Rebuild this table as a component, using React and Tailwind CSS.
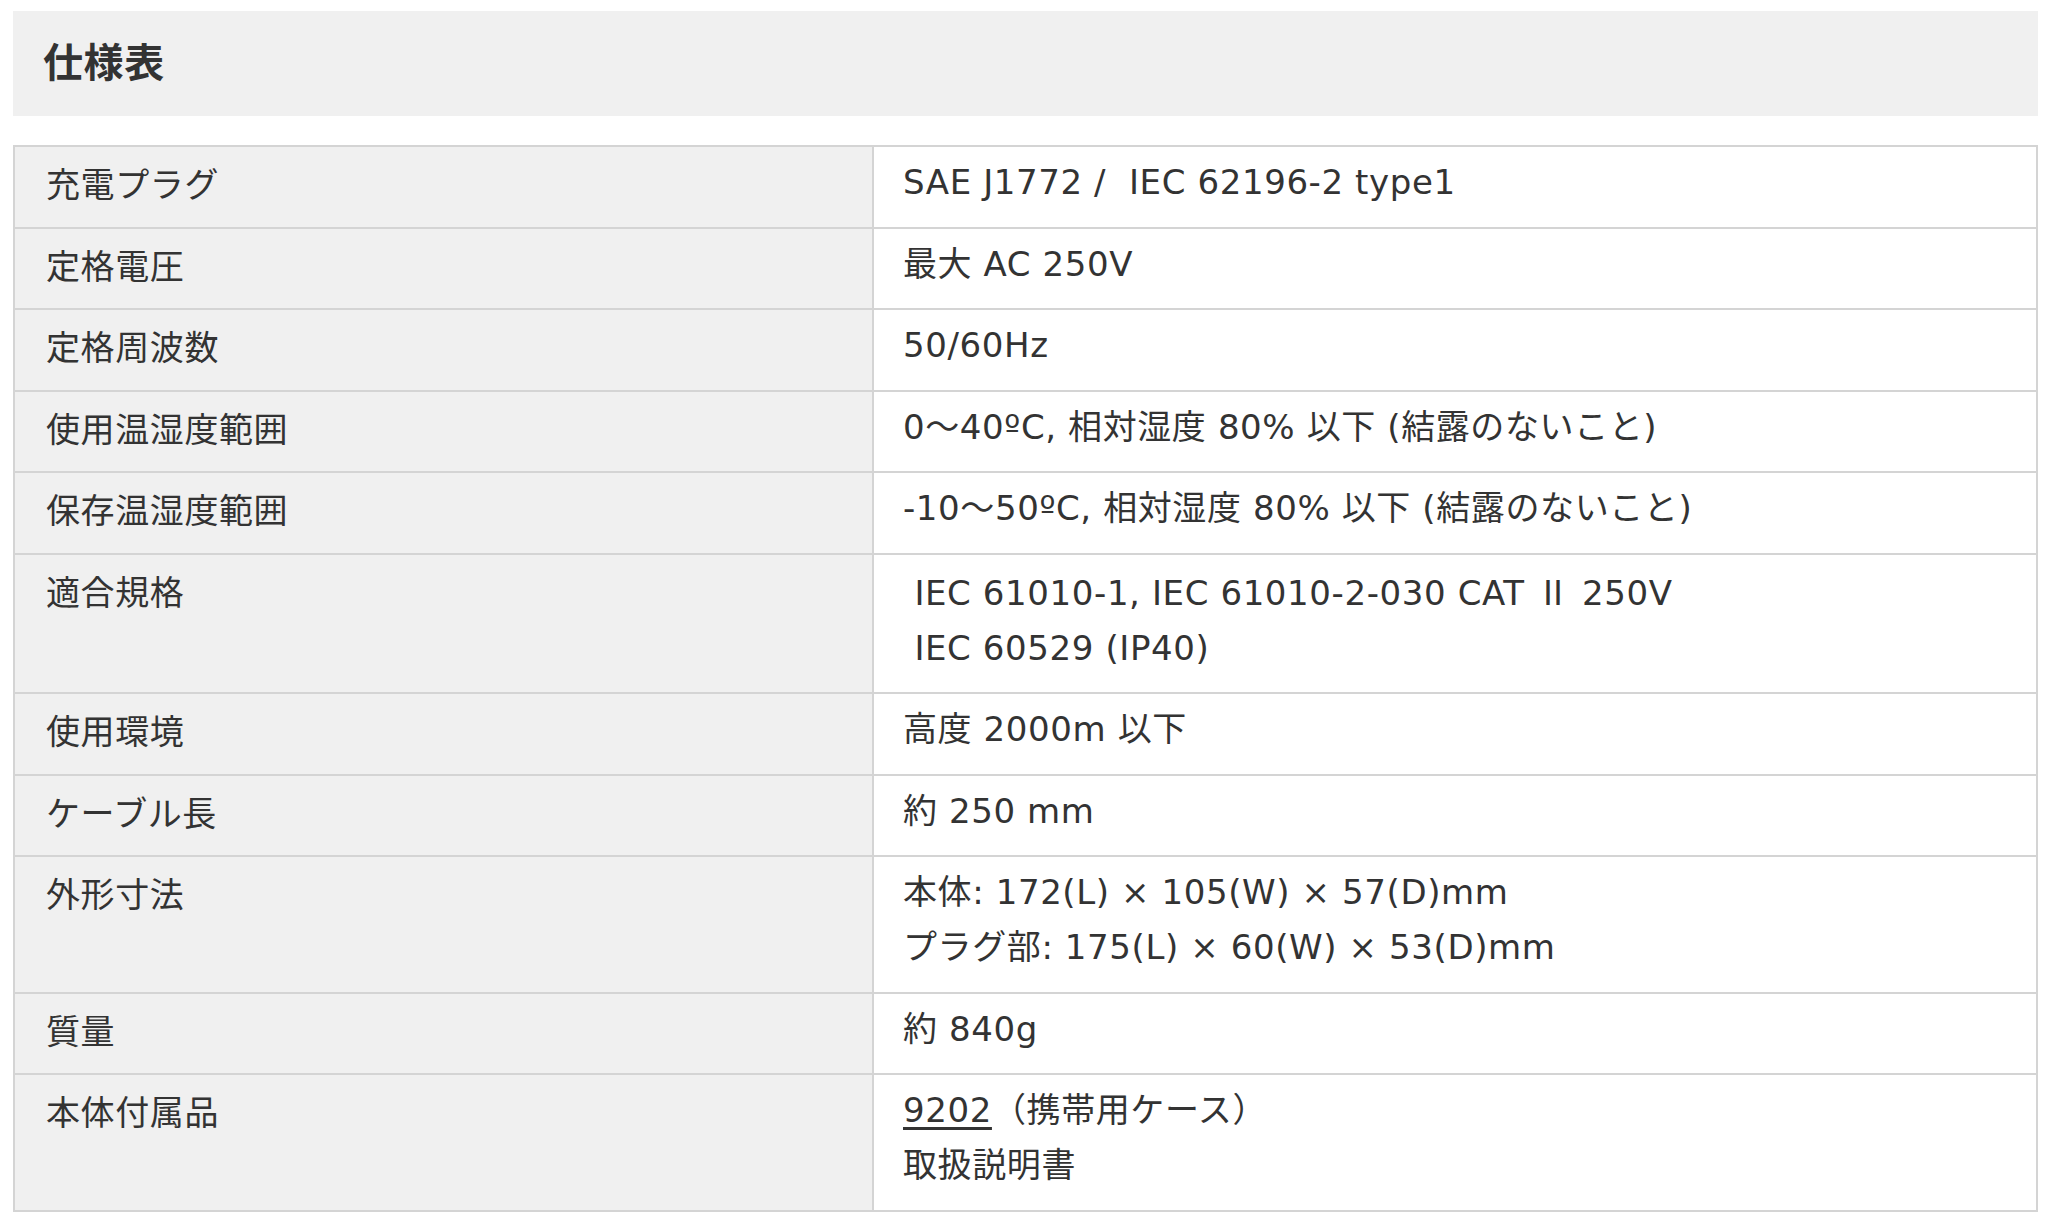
import React from 'react';

const cjk = "font-['Noto_Sans_CJK_JP',sans-serif]";

const specs = [
  { label: '充電プラグ', value: ['SAE J1772 /\u00a0 IEC 62196-2 type1'] },
  { label: '定格電圧', value: ['最大 AC 250V'] },
  { label: '定格周波数', value: ['50/60Hz'] },
  { label: '使用温湿度範囲', value: ['0〜40ºC, 相対湿度 80% 以下 (結露のないこと)'] },
  { label: '保存温湿度範囲', value: ['-10〜50ºC, 相対湿度 80% 以下 (結露のないこと)'] },
  {
    label: '適合規格',
    value: [
      <>
        {'\u00a0IEC 61010-1, IEC 61010-2-030 CAT '}
        <span className={cjk}>Ⅱ</span>
        {' 250V'}
      </>,
      '\u00a0IEC 60529 (IP40)',
    ],
  },
  { label: '使用環境', value: ['高度 2000m 以下'] },
  { label: 'ケーブル長', value: ['約 250 mm'] },
  { label: '外形寸法', value: ['本体: 172(L) × 105(W) × 57(D)mm', 'プラグ部: 175(L) × 60(W) × 53(D)mm'] },
  { label: '質量', value: ['約 840g'] },
];

const labelCell = "w-[859px] bg-[#f0f0f0] border-2 border-[#d4d4d4] px-[31px] pt-[8px] pb-[16.5px] align-top font-['Noto_Sans_CJK_JP',sans-serif]";
const valueCell = "bg-white border-2 border-[#d4d4d4] px-[29px] pt-[8px] pb-[16.5px] align-top whitespace-pre";

const App = () => {
  return (
    <div className="min-h-screen bg-white pt-[11px] pl-[13px] pr-[10px] text-[#333] tracking-[0.6px] font-['DejaVu_Sans','Noto_Sans_CJK_JP',sans-serif]">
      <div className="bg-[#f0f0f0] h-[105px] flex items-center px-[30px] pb-[8px]">
        <h2 className={"text-[40px] font-bold " + cjk}>仕様表</h2>
      </div>

      <table className="w-full mt-[29px] border-collapse border-2 border-[#d4d4d4] text-[34px] leading-[55px]">
        <tbody>
          {specs.map((item, index) => (
            <tr key={index}>
              <td className={labelCell}>{item.label}</td>
              <td className={valueCell}>
                {item.value.map((line, i) => (
                  <div key={i}>{line}</div>
                ))}
              </td>
            </tr>
          ))}
          <tr>
            <td className={labelCell}>本体付属品</td>
            <td className={valueCell}>
              <div>
                <a href="#" className="underline underline-offset-[5px]">9202</a>（携帯用ケース）
              </div>
              <div>取扱説明書</div>
            </td>
          </tr>
        </tbody>
      </table>
    </div>
  );
};

export default App;
